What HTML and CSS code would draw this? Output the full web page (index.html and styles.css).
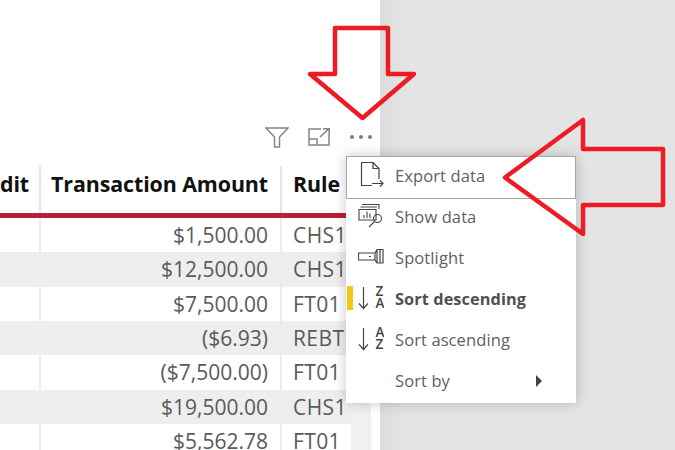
FILE: index.html
```html
<!DOCTYPE html>
<html lang="en">
<head>
<meta charset="utf-8">
<title>Table visual menu</title>
<link rel="stylesheet" href="styles.css">
</head>
<body>
<div class="page">
  <section class="canvas">
    <div class="toolbar">
      <svg class="tool" width="24" height="21" viewBox="0 0 24 21" fill="none" stroke="#858585" stroke-width="1.500"><path d="M1 1H23L14.500 10V20H9.500V10Z"/></svg>
      <svg class="tool expand" width="22" height="18" viewBox="0 0 22 18" fill="none" stroke="#858585" stroke-width="1.500"><path d="M13 1H1V17H21V7M1 11H9V17M12 9L20.500 1M15 .8H21.200V7"/></svg>
      <div class="dots"><i></i><i></i><i></i></div>
    </div>
    <div class="table">
      <div class="grid">
        <div class="row head"><div class="c1">dit</div><div class="c2">Transaction Amount</div><div class="c3">Rule</div></div>
        <div class="row"><div class="c1"></div><div class="c2">$1,500.00</div><div class="c3">CHS1</div></div>
        <div class="row band"><div class="c1"></div><div class="c2">$12,500.00</div><div class="c3">CHS1</div></div>
        <div class="row"><div class="c1"></div><div class="c2">$7,500.00</div><div class="c3">FT01</div></div>
        <div class="row band"><div class="c1"></div><div class="c2">($6.93)</div><div class="c3">REBT</div></div>
        <div class="row"><div class="c1"></div><div class="c2">($7,500.00)</div><div class="c3">FT01</div></div>
        <div class="row band"><div class="c1"></div><div class="c2">$19,500.00</div><div class="c3">CHS1</div></div>
        <div class="row"><div class="c1"></div><div class="c2">$5,562.78</div><div class="c3">FT01</div></div>
      </div>
      <div class="track"></div>
    </div>
  </section>
  <aside class="side"></aside>
</div>

<div class="menu">
  <div class="item active">
    <svg width="26" height="28" viewBox="0 0 26 28" fill="none" stroke="#444" stroke-width="1.200"><path d="M14 23.500H3.500V.5H15L21 6.500V17M15 .5V6.500H21M14 21.500H25M22 18.500L25 21.500L22 24.500"/></svg>
    <span>Export data</span>
  </div>
  <div class="item">
    <svg width="26" height="28" viewBox="0 0 26 28" fill="none" stroke="#444" stroke-width="1.100"><path d="M4 1.500H21V6M2.500 4H19M1 6.500H18V17H1ZM6 15V12M9 15V8.500M12 15V10.500"/><circle cx="19.500" cy="15.500" r="4"/><path d="M16.500 18.500L11 24"/></svg>
    <span>Show data</span>
  </div>
  <div class="item">
    <svg width="26" height="20" viewBox="0 0 26 20" fill="none" stroke="#444" stroke-width="1.200"><path d="M.5 5H17V12H.5ZM17 5L19 1.500H25V15H19L17 12M19 1.500V15M22 1.500V15M11 8.500H13"/></svg>
    <span>Spotlight</span>
  </div>
  <div class="item strong">
    <i class="mark"></i>
    <svg width="26" height="26" viewBox="0 0 26 26" fill="none" stroke="#444" stroke-width="1.200"><path d="M5.500 1V22M1 17.500L5.500 22.500L10 17.500"/><text class="az" x="17.500" y="10">Z</text><text class="az" x="17.500" y="22">A</text></svg>
    <span>Sort descending</span>
  </div>
  <div class="item">
    <svg width="26" height="26" viewBox="0 0 26 26" fill="none" stroke="#444" stroke-width="1.200"><path d="M5.500 1V22M1 17.500L5.500 22.500L10 17.500"/><text class="az" x="17.500" y="10">A</text><text class="az" x="17.500" y="22">Z</text></svg>
    <span>Sort ascending</span>
  </div>
  <div class="item">
    <span class="noicon">Sort by</span>
    <i class="caret"></i>
  </div>
</div>

<svg class="arrows" width="675" height="450" viewBox="0 0 675 450" fill="none" stroke="#ed1c24" stroke-width="4.500" stroke-linejoin="round">
  <path d="M335 28H388V74H414L362.500 118L310 74H335Z"/>
  <path d="M505 177.500L583 120V149H663V205H583V234Z"/>
</svg>
</body>
</html>
```

FILE: styles.css
```css
* { box-sizing: border-box; }
html, body { margin: 0; height: 100%; overflow: hidden; }
body { font-family: "Open Sans", "Noto Sans", sans-serif; background: #fff; }
.page { display: flex; width: 675px; height: 450px; }
.canvas { width: 380px; flex: none; background: #fff; padding-top: 125px; overflow: hidden; }
.side { flex: 1; background: linear-gradient(90deg, #dcdcdc, #e4e4e4 24px); }
.toolbar { display: flex; align-items: center; height: 24px; padding-left: 265px; }
.tool { flex: none; }
.expand { margin-left: 19px; }
.dots { display: flex; gap: 5px; margin-left: 20px; }
.dots i { width: 4px; height: 4px; border-radius: 50%; background: #7c7c7c; }
.table { margin-top: 17px; width: 371px; height: 300px; display: flex; }
.grid { width: 351px; flex: none; }
.track { flex: 1; background: #f0f0f0; }
.row { display: flex; height: 34.330px; color: #5a5a5a; font-size: 21px; line-height: 34px; }
.band { background: #eeeeee; }
.row > div { flex: none; white-space: nowrap; overflow: hidden; }
.c1 { width: 41px; border-right: 2px solid #ececec; }
.c2 { width: 241px; padding-right: 12px; text-align: right; border-right: 2px solid #ececec; }
.c3 { width: 69px; padding-left: 11px; letter-spacing: 0.4px; }
.head { height: 52px; line-height: 36px; color: #111; font-size: 21.400px; font-weight: 700; letter-spacing: -0.1px; border-bottom: 5px solid #bc1d3a; }
.head .c1 { text-align: right; padding-right: 17px; }
.head .c3 { letter-spacing: -0.1px; }
.head .c1, .head .c2 { border-right-color: #f1dfe3; }
.menu { position: absolute; left: 346px; top: 156px; width: 230px; height: 247px; background: #fff; box-shadow: 0 0 12px rgba(0,0,0,.22); display: flex; flex-direction: column; }
.item { position: relative; display: flex; align-items: center; height: 41px; padding: 0 0 3px 12px; color: #606060; font-size: 16.500px; letter-spacing: 0.1px; }
.item span { margin-bottom: 2px; }
.item svg { flex: none; width: 26px; margin-right: 11px; }
.item.active { height: 43px; margin-bottom: -1px; border: 1px solid #a6a6a6; padding: 0 0 3px 11px; }
.item.strong { font-weight: 700; color: #505050; font-size: 16.300px; }
.item.strong span { margin-bottom: 0; }
.noicon { margin-left: 37px; }
.mark { position: absolute; left: 1px; top: 6px; width: 6px; height: 24px; background: #f2c811; }
.caret { position: absolute; left: 190px; top: 13px; border-left: 6px solid #444; border-top: 6px solid transparent; border-bottom: 6px solid transparent; }
.az { font: 600 13.500px "Open Sans", sans-serif; fill: #444; stroke: none; }
.arrows { position: absolute; left: 0; top: 0; pointer-events: none; }
```
